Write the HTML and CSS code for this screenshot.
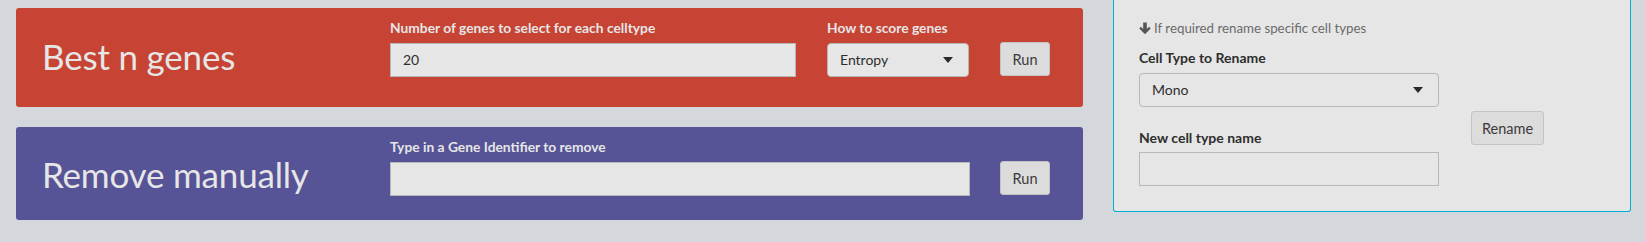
FILE: index.html
```html
<!DOCTYPE html>
<html>
<head>
<meta charset="utf-8">
<link rel="stylesheet" href="styles.css">
</head>
<body>
<div class="page">
  <div class="left">
    <section class="box box-red">
      <h1 class="box-title">Best n genes</h1>
      <div class="field field-n">
        <label class="lbl">Number of genes to select for each celltype</label>
        <div class="ctl">20</div>
      </div>
      <div class="field field-score">
        <label class="lbl">How to score genes</label>
        <div class="ctl select">Entropy<span class="caret"></span></div>
      </div>
      <button class="btn btn-run">Run</button>
    </section>
    <section class="box box-purple">
      <h1 class="box-title">Remove manually</h1>
      <div class="field field-gene">
        <label class="lbl">Type in a Gene Identifier to remove</label>
        <div class="ctl"></div>
      </div>
      <button class="btn btn-run">Run</button>
    </section>
  </div>
  <aside class="panel">
    <div class="panel-form">
      <div class="hint">
        <svg class="arrow" viewBox="0 0 12 13" width="12" height="13"><path d="M4.2 0.5h3.6v6.6l2.3-2.3 1.6 1.7L6 12.2 0.3 6.5l1.6-1.7 2.3 2.3z" fill="#555"/></svg>
        <span>If required rename specific cell types</span>
      </div>
      <div class="plbl plbl-first">Cell Type to Rename</div>
      <div class="pctl select">Mono<span class="caret"></span></div>
      <div class="plbl plbl-second">New cell type name</div>
      <div class="pctl pinput"></div>
    </div>
    <button class="btn btn-rename">Rename</button>
  </aside>
</div>
</body>
</html>
```
FILE: styles.css
```css
html, body {
  margin: 0;
  padding: 0;
  background: #d4d8dc;
  font-family: "Lato", "Liberation Sans", sans-serif;
  overflow: hidden;
}
.page {
  display: flex;
  align-items: flex-start;
  padding: 0 14px 0 16px;
  gap: 30px;
}
.left {
  width: 1067px;
  flex: none;
  display: flex;
  flex-direction: column;
  gap: 20px;
  padding-top: 8px;
}
.box {
  display: flex;
  align-items: flex-start;
  box-sizing: border-box;
  padding: 10px 0 0 26px;
  border-radius: 3px;
  color: #e6e6e6;
}
.box-red { background: #c74333; height: 99px; }
.box-purple { background: #565397; height: 93px; }
.box-title {
  margin: 20px 0 0 0;
  width: 348px;
  flex: none;
  font-size: 35px;
  line-height: 36px;
  font-weight: 400;
  letter-spacing: -0.2px;
}
.box-purple .box-title { margin-top: 19px; }
.field { display: flex; flex-direction: column; flex: none; }
.lbl {
  font-size: 13.8px;
  line-height: 20px;
  font-weight: 700;
  margin-bottom: 5px;
  white-space: nowrap;
}
.field-n { width: 406px; margin-right: 31px; }
.field-score { width: 142px; margin-right: 31px; }
.field-gene { width: 580px; margin-right: 30px; }
.ctl {
  box-sizing: border-box;
  height: 34px;
  background: #e6e6e6;
  border: 1px solid #b8b8b8;
  padding: 0 12px;
  font-size: 14px;
  line-height: 32px;
  color: #2e2e2e;
}
.select {
  position: relative;
  border-radius: 4px;
}
.caret {
  position: absolute;
  right: 15px;
  top: 50%;
  margin-top: -3px;
  width: 0;
  height: 0;
  border-left: 5.5px solid transparent;
  border-right: 5.5px solid transparent;
  border-top: 6px solid #2a2a2a;
}
.btn {
  box-sizing: border-box;
  background: #dcdcdc;
  border: 1px solid #c4c4c4;
  border-radius: 3px;
  font-family: inherit;
  font-size: 14.5px;
  color: #3a3a3a;
  height: 34px;
  padding: 0;
  flex: none;
}
.btn-run { width: 50px; margin-top: 24px; }
.panel {
  width: 518px;
  flex: none;
  box-sizing: border-box;
  margin-top: -10px;
  background: #e6e6e6;
  border: 1px solid #00add7;
  border-top-width: 3px;
  border-radius: 3px;
  padding: 25px 0 25px 25px;
  display: flex;
  align-items: flex-start;
}
.panel-form { width: 300px; display: flex; flex-direction: column; }
.hint {
  display: flex;
  align-items: center;
  height: 20px;
  font-size: 13.3px;
  color: #6b6b6b;
}
.arrow { margin-right: 3px; }
.plbl {
  font-size: 14px;
  line-height: 20px;
  font-weight: 700;
  color: #2e2e2e;
}
.plbl-first { margin-top: 10px; }
.plbl-second { margin-top: 21px; }
.pctl {
  box-sizing: border-box;
  height: 34px;
  background: #e6e6e6;
  border: 1px solid #b8b8b8;
  padding: 0 12px;
  font-size: 14px;
  line-height: 32px;
  color: #2e2e2e;
}
.plbl-first + .pctl { margin-top: 5px; }
.pinput { margin-top: 4px; }
.btn-rename { width: 73px; margin: 93px 0 0 32px; }
```
